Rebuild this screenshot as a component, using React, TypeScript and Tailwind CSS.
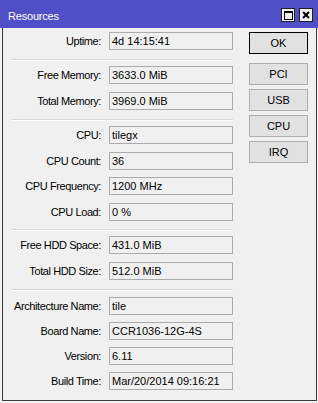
const font = { fontFamily: '"Liberation Sans", Arial, sans-serif' };

type Row = { label: string; value: string; mt: string };

const rows: (Row | "sep")[] = [
  { label: "Uptime:", value: "4d 14:15:41", mt: "mt-[4px]" },
  "sep",
  { label: "Free Memory:", value: "3633.0 MiB", mt: "mt-[5px]" },
  { label: "Total Memory:", value: "3969.0 MiB", mt: "mt-[8px]" },
  "sep",
  { label: "CPU:", value: "tilegx", mt: "mt-[5px]" },
  { label: "CPU Count:", value: "36", mt: "mt-[8px]" },
  { label: "CPU Frequency:", value: "1200 MHz", mt: "mt-[7px]" },
  { label: "CPU Load:", value: "0 %", mt: "mt-[8px]" },
  "sep",
  { label: "Free HDD Space:", value: "431.0 MiB", mt: "mt-[5px]" },
  { label: "Total HDD Size:", value: "512.0 MiB", mt: "mt-[8px]" },
  "sep",
  { label: "Architecture Name:", value: "tile", mt: "mt-[6px]" },
  { label: "Board Name:", value: "CCR1036-12G-4S", mt: "mt-[7px]" },
  { label: "Version:", value: "6.11", mt: "mt-[7px]" },
  { label: "Build Time:", value: "Mar/20/2014 09:16:21", mt: "mt-[7px]" },
];

const sepMt = ["mt-[9px]", "mt-[9px]", "mt-[8px]", "mt-[9px]"];

function Button({ label, mt, primary }: { label: string; mt: string; primary?: boolean }) {
  return (
    <div
      className={`${mt} w-[59px] h-[22px] flex items-center justify-center text-[11px] text-black bg-[#e1e1e1] border ${
        primary ? "border-black" : "border-[#adadad]"
      }`}
    >
      {label}
    </div>
  );
}

export default function App() {
  let s = 0;
  return (
    <div className="w-[318px] h-[403px] bg-[#f4f4f4] overflow-hidden" style={font}>
      {/* title bar */}
      <div className="h-[28px] bg-[#4f4fc8] flex items-center pl-[8px] pr-[5px]">
        <span className="text-white text-[11px] tracking-[-0.2px] mt-[4px]">Resources</span>
        <div className="ml-auto flex gap-[4px] mt-[2px]">
          <div className="w-[14px] h-[14px] bg-[#f0f0f0] border border-[#222] flex items-center justify-center">
            <div className="w-[9px] h-[9px] border border-black border-t-2" />
          </div>
          <div className="w-[14px] h-[14px] bg-[#f0f0f0] border border-[#222] flex items-center justify-center">
            <svg width="8" height="8" viewBox="0 0 8 8">
              <path d="M1 1L7 7M7 1L1 7" stroke="#000" strokeWidth="2" />
            </svg>
          </div>
        </div>
      </div>

      {/* body */}
      <div className="ml-[2px] w-[315px] h-[373px] bg-[#f0f0f0] border-l border-r border-b border-[#3a3a3a] flex">
        <div className="flex flex-col">
          {rows.map((r, i) =>
            r === "sep" ? (
              <div key={i} className={`${sepMt[s++]} ml-[9px] w-[221px] h-[2px] border-t border-[#d7d7d7] border-b border-b-white`} />
            ) : (
              <div key={i} className={`${r.mt} flex items-center h-[18px]`}>
                <div className="w-[98px] text-right text-[11px] tracking-[-0.4px] text-black whitespace-nowrap">{r.label}</div>
                <div className="ml-[8px] w-[124px] h-[18px] border border-[#ababab] bg-[#f0f0f0] pl-[2px] text-[11px] leading-[16px] text-black whitespace-nowrap overflow-hidden">
                  {r.value}
                </div>
              </div>
            )
          )}
        </div>
        <div className="ml-[16px] flex flex-col">
          <Button label="OK" mt="mt-[4px]" primary />
          <Button label="PCI" mt="mt-[9px]" />
          <Button label="USB" mt="mt-[4px]" />
          <Button label="CPU" mt="mt-[4px]" />
          <Button label="IRQ" mt="mt-[4px]" />
        </div>
      </div>
    </div>
  );
}
